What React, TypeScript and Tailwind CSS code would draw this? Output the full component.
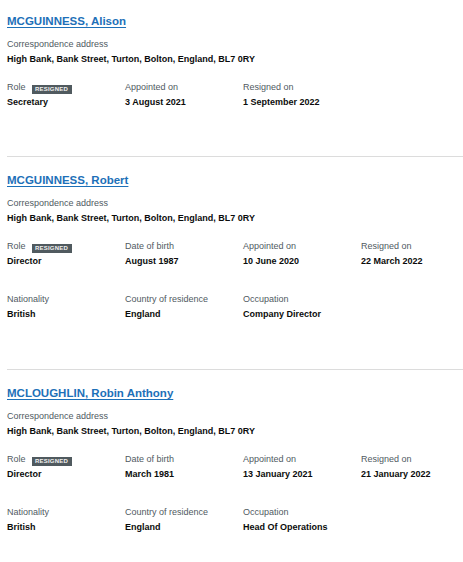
import React from "react";

type Field = { label: string; value: string; badge?: boolean };
type Officer = {
  name: string;
  address: string;
  rows: Field[][];
};

const officers: Officer[] = [
  {
    name: "MCGUINNESS, Alison",
    address: "High Bank, Bank Street, Turton, Bolton, England, BL7 0RY",
    rows: [
      [
        { label: "Role", value: "Secretary", badge: true },
        { label: "Appointed on", value: "3 August 2021" },
        { label: "Resigned on", value: "1 September 2022" },
      ],
    ],
  },
  {
    name: "MCGUINNESS, Robert",
    address: "High Bank, Bank Street, Turton, Bolton, England, BL7 0RY",
    rows: [
      [
        { label: "Role", value: "Director", badge: true },
        { label: "Date of birth", value: "August 1987" },
        { label: "Appointed on", value: "10 June 2020" },
        { label: "Resigned on", value: "22 March 2022" },
      ],
      [
        { label: "Nationality", value: "British" },
        { label: "Country of residence", value: "England" },
        { label: "Occupation", value: "Company Director" },
      ],
    ],
  },
  {
    name: "MCLOUGHLIN, Robin Anthony",
    address: "High Bank, Bank Street, Turton, Bolton, England, BL7 0RY",
    rows: [
      [
        { label: "Role", value: "Director", badge: true },
        { label: "Date of birth", value: "March 1981" },
        { label: "Appointed on", value: "13 January 2021" },
        { label: "Resigned on", value: "21 January 2022" },
      ],
      [
        { label: "Nationality", value: "British" },
        { label: "Country of residence", value: "England" },
        { label: "Occupation", value: "Head Of Operations" },
      ],
    ],
  },
];

function Badge() {
  return (
    <span className="ml-[6px] inline-flex h-[9px] w-[40px] items-center justify-center bg-[#505a5f] align-[-1px] text-[6px] font-bold leading-none tracking-[0.2px] text-[#f3f2f1]">
      RESIGNED
    </span>
  );
}

function OfficerBlock({ o, first }: { o: Officer; first: boolean }) {
  return (
    <div
      className={
        first
          ? "pt-[13px] pb-[46px]"
          : "border-t border-[#dcdcdc] pt-[15px] pb-[47px]"
      }
    >
      <div className="h-[16px] text-[11.5px] font-bold leading-[16px]">
        <a
          href="#"
          className="text-[#1d70b8] underline decoration-1 underline-offset-[1.5px]"
        >
          {o.name}
        </a>
      </div>
      <div className="mt-[8px] text-[9px] leading-[15px] text-[#505a5f]">
        Correspondence address
      </div>
      <div className="text-[9px] font-bold leading-[15px] text-[#0b0c0c]">
        {o.address}
      </div>
      {o.rows.map((row, ri) => (
        <div
          key={ri}
          className={
            "grid grid-cols-[118px_118px_118px_118px] " +
            (ri === 0 ? "mt-[13px]" : "mt-[23px]")
          }
        >
          {row.map((f, fi) => (
            <div key={fi}>
              <div className="whitespace-nowrap text-[9px] leading-[15px] text-[#505a5f]">
                {f.label}
                {f.badge ? <Badge /> : null}
              </div>
              <div className="whitespace-nowrap text-[9px] font-bold leading-[15px] text-[#0b0c0c]">
                {f.value}
              </div>
            </div>
          ))}
        </div>
      ))}
    </div>
  );
}

export default function App() {
  return (
    <div
      className="min-h-[562px] w-full overflow-hidden bg-white pl-[7px]"
      style={{ fontFamily: '"Liberation Sans", Arial, sans-serif' }}
    >
      {officers.map((o, i) => (
        <OfficerBlock key={i} o={o} first={i === 0} />
      ))}
    </div>
  );
}
